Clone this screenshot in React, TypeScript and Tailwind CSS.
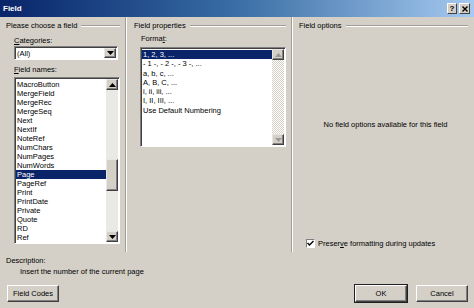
import React from 'react'

const fieldNames = [
  'MacroButton',
  'MergeField',
  'MergeRec',
  'MergeSeq',
  'Next',
  'NextIf',
  'NoteRef',
  'NumChars',
  'NumPages',
  'NumWords',
  'Page',
  'PageRef',
  'Print',
  'PrintDate',
  'Private',
  'Quote',
  'RD',
  'Ref',
]

const formats = [
  '1, 2, 3, ...',
  '- 1 -, - 2 -, - 3 -, ...',
  'a, b, c, ...',
  'A, B, C, ...',
  'i, ii, iii, ...',
  'I, II, III, ...',
  'Use Default Numbering',
]

function Arrow({ up = false, disabled = false }: { up?: boolean; disabled?: boolean }) {
  return (
    <svg width="7" height="4" viewBox="0 0 7 4" className={up ? 'rotate-180' : ''}>
      <polygon points="0,0 7,0 3.5,4" fill={disabled ? '#9c9a94' : '#000'} />
    </svg>
  )
}

function ArrowButton({ up = false, disabled = false }: { up?: boolean; disabled?: boolean }) {
  return (
    <div className="w-[12px] h-[11px] flex items-center justify-center bg-[#d4d0c8] border border-t-[#e8e6e2] border-l-[#e8e6e2] border-r-[#404040] border-b-[#404040] shadow-[inset_-1px_-1px_0_#808080]">
      <Arrow up={up} disabled={disabled} />
    </div>
  )
}

function GroupHeader({ title }: { title: string }) {
  return (
    <div className="flex items-center gap-[4px]">
      <span className="whitespace-nowrap">{title}</span>
      <div className="flex-1 h-[2px] border-t border-t-[#a09d96] border-b border-b-white" />
    </div>
  )
}

function Button({ label, def = false }: { label: React.ReactNode; def?: boolean }) {
  return (
    <button
      className={
        'w-[52px] h-[17px] flex items-center justify-center bg-[#d4d0c8] ' +
        (def ? 'outline outline-1 outline-[#202020] ' : '') +
        'border border-t-white border-l-white border-r-[#404040] border-b-[#404040] shadow-[inset_-1px_-1px_0_#808080]'
      }
    >
      {label}
    </button>
  )
}

function Sunken({ className, children }: { className: string; children: React.ReactNode }) {
  return (
    <div
      className={
        'bg-white border border-t-[#808080] border-l-[#808080] border-r-white border-b-white shadow-[inset_1px_1px_0_#404040] ' +
        className
      }
    >
      {children}
    </div>
  )
}

export default function App() {
  return (
    <div
      className="w-[474px] h-[308px] bg-[#d4d0c8] text-[7.5px] leading-[9px] text-black flex flex-col overflow-hidden"
      style={{ fontFamily: '"Liberation Sans", Arial, sans-serif' }}
    >
      {/* title bar */}
      <div className="h-[17px] bg-linear-to-r from-[#0a246a] via-[#3a6ea5] to-[#a6caf0] flex items-center pl-[3px] pr-[4px]">
        <span className="text-white font-bold text-[8px]">Field</span>
        <div className="ml-auto flex gap-[2px]">
          <div className="w-[10px] h-[11px] flex items-center justify-center bg-[#d4d0c8] border border-t-white border-l-white border-r-[#404040] border-b-[#404040] text-[8px] font-bold leading-none">
            ?
          </div>
          <div className="w-[11px] h-[11px] flex items-center justify-center bg-[#d4d0c8] border border-t-white border-l-white border-r-[#404040] border-b-[#404040]">
            <svg width="6" height="6" viewBox="0 0 6 6">
              <path d="M0.5 0.5 L5.5 5.5 M5.5 0.5 L0.5 5.5" stroke="#000" strokeWidth="1.4" />
            </svg>
          </div>
        </div>
      </div>

      {/* columns */}
      <div className="flex h-[235px]">
        {/* left */}
        <div className="w-[125px] pl-[6px] pr-[5px] pt-[4px] flex flex-col">
          <GroupHeader title="Please choose a field" />
          <div className="pl-[8px] flex flex-col">
            <div className="mt-[6px]">
              <span className="underline">C</span>ategories:
            </div>
            <Sunken className="mt-[1px] w-[104px] h-[14px] flex items-center pl-[2px] pr-[1px]">
              <span>(All)</span>
              <div className="ml-auto">
                <div className="w-[12px] h-[10px] flex items-center justify-center bg-[#d4d0c8] border border-t-[#e8e6e2] border-l-[#e8e6e2] border-r-[#404040] border-b-[#404040] shadow-[inset_-1px_-1px_0_#808080]">
                  <Arrow />
                </div>
              </div>
            </Sunken>
            <div className="mt-[5px]">
              <span className="underline">F</span>ield names:
            </div>
            <Sunken className="mt-[3px] w-[106px] h-[167px] flex pt-[1px] pl-[1px] pr-[1px] pb-[1px]">
              <div className="flex-1 flex flex-col pt-[1px]">
                {fieldNames.map((n) => (
                  <div
                    key={n}
                    className={
                      'h-[9px] pl-[1px] whitespace-nowrap ' +
                      (n === 'Page' ? 'bg-[#0a246a] text-white' : '')
                    }
                  >
                    {n}
                  </div>
                ))}
              </div>
              <div className="w-[12px] flex flex-col bg-[#ebe9e4]">
                <ArrowButton up />
                <div className="mt-[69px] h-[32px] bg-[#d4d0c8] border border-t-[#e8e6e2] border-l-[#e8e6e2] border-r-[#404040] border-b-[#404040] shadow-[inset_-1px_-1px_0_#808080]" />
                <div className="flex-1" />
                <ArrowButton />
              </div>
            </Sunken>
          </div>
        </div>

        <div className="w-[2px] h-full border-l border-l-[#a09d96] border-r border-r-white" />

        {/* middle */}
        <div className="w-[164px] pl-[7px] pr-[5px] pt-[4px] flex flex-col">
          <GroupHeader title="Field properties" />
          <div className="mt-[4px] pl-[7px]">
            Forma<span className="underline">t</span>:
          </div>
          <Sunken className="mt-[4px] ml-[6px] w-[146px] h-[100px] flex pt-[1px] pl-[1px] pr-[1px] pb-[1px]">
            <div className="flex-1 flex flex-col pt-[1px]">
              {formats.map((f, i) => (
                <div
                  key={f}
                  className={'h-[9.3px] pl-[1px] whitespace-nowrap ' + (i === 0 ? 'bg-[#0a246a] text-white' : '')}
                >
                  {f}
                </div>
              ))}
            </div>
            <div className="w-[12px] flex flex-col justify-between bg-[repeating-conic-gradient(#d4d0c8_0_25%,#ffffff_0_50%)] bg-size-[2px_2px]">
              <ArrowButton up disabled />
              <ArrowButton disabled />
            </div>
          </Sunken>
        </div>

        <div className="w-[2px] h-full border-l border-l-[#a09d96] border-r border-r-white" />

        {/* right */}
        <div className="flex-1 pl-[6px] pr-[6px] pt-[4px] flex flex-col">
          <GroupHeader title="Field options" />
          <div className="mt-[90px] text-center pl-[4px]">No field options available for this field</div>
          <div className="mt-[110px] ml-[7px] flex items-center gap-[3px]">
            <div className="w-[9px] h-[9px] bg-white border border-t-[#808080] border-l-[#808080] border-r-white border-b-white flex items-center justify-center">
              <svg width="7" height="7" viewBox="0 0 7 7">
                <path d="M0.5 3 L2.5 5 L6.5 1" stroke="#000" strokeWidth="1.4" fill="none" />
              </svg>
            </div>
            <span>
              Preser<span className="underline">v</span>e formatting during updates
            </span>
          </div>
        </div>
      </div>

      {/* description */}
      <div className="pl-[6px] mt-[4px]">Description:</div>
      <div className="pl-[20px] mt-[2px]">Insert the number of the current page</div>

      {/* buttons */}
      <div className="mt-[9px] flex px-[7px] pr-[6px]">
        <Button label="Field Codes" />
        <div className="ml-auto flex gap-[9px]">
          <Button label="OK" def />
          <Button label="Cancel" />
        </div>
      </div>
    </div>
  )
}
